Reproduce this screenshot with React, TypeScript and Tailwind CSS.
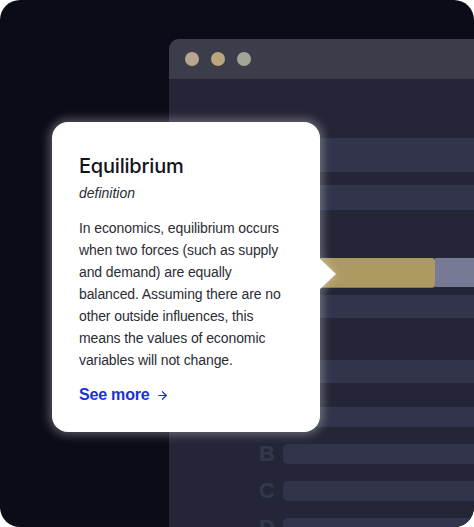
import { ArrowRight } from "lucide-react";

const answers = ["A", "B", "C", "D"];

export default function App() {
  return (
    <div
      className="bg-white w-[474px] h-[527px]"
      style={{ fontFamily: "'Liberation Sans', Arial, sans-serif" }}
    >
      <div className="relative w-[474px] h-[527px] rounded-[20px] bg-[#0a0c17] overflow-hidden pt-[39px] pl-[169px] flex">
        {/* mock browser window */}
        <div className="w-[340px] shrink-0 flex flex-col rounded-tl-[10px] overflow-hidden bg-[#242638]">
          <div className="h-[40px] shrink-0 bg-[#3b3d4b] flex items-center gap-[12px] pl-[16px]">
            <span className="w-[14px] h-[14px] rounded-full bg-[#b8a690]" />
            <span className="w-[14px] h-[14px] rounded-full bg-[#b9a67e]" />
            <span className="w-[14px] h-[14px] rounded-full bg-[#a0a796]" />
          </div>

          <div className="flex-1 min-h-0 flex flex-col overflow-hidden">
            <div className="shrink-0 mt-[59px] h-[34px] ml-[60px] bg-[#31344a]" />
            <div className="shrink-0 mt-[13px] h-[25px] ml-[60px] bg-[#31344a]" />
            <div className="shrink-0 mt-[48px] h-[29px] ml-[60px] flex">
              <div className="w-[206px] bg-[#ad9962] rounded-r-[3px] shadow-[0_1px_0_#8a7a4c]" />
              <div className="flex-1 bg-[#777a94]" />
            </div>
            <div className="shrink-0 mt-[8px] h-[23px] ml-[60px] bg-[#31344a]" />
            <div className="shrink-0 mt-[42px] h-[23px] ml-[60px] bg-[#31344a]" />

            <div className="shrink-0 mt-[24px] flex flex-col gap-[17px]">
              {answers.map((a) => (
                <div key={a} className="flex items-center h-[20px] pl-[90px]">
                  <span className="w-[24px] text-[22px] font-bold leading-none text-[#34374d]">
                    {a}
                  </span>
                  <div className="flex-1 h-[20px] rounded-[5px] bg-[#31344a]" />
                </div>
              ))}
            </div>
          </div>
        </div>

        {/* definition popover */}
        <div className="absolute left-[52px] top-[122px] w-[268px] rounded-[16px] bg-white pt-[30px] pb-[25px] px-[27px] shadow-[0_0_10px_3px_rgba(255,255,255,0.3)]">
          <svg
            className="absolute right-[-17px] top-[136px] drop-shadow-[0_0_5px_rgba(255,255,255,0.35)]"
            width="18"
            height="32"
            viewBox="0 0 18 32"
          >
            <polygon points="0,0 17,16 0,32" fill="#ffffff" />
          </svg>

          <h1
            className="text-[20px] leading-[28px] font-medium text-[#12141c] tracking-[-0.2px]"
            style={{ fontFamily: "Inter, 'Liberation Sans', sans-serif" }}
          >
            Equilibrium
          </h1>
          <p className="mt-[3px] text-[14px] leading-[20px] italic text-[#2b2c34]">
            definition
          </p>
          <p className="mt-[14px] text-[14px] leading-[22px] tracking-[-0.1px] text-[#2b2c34] whitespace-nowrap">
            In economics, equilibrium occurs
            <br />
            when two forces (such as supply
            <br />
            and demand) are equally
            <br />
            balanced. Assuming there are no
            <br />
            other outside influences, this
            <br />
            means the values of economic
            <br />
            variables will not change.
          </p>
          <a className="mt-[12px] flex items-center gap-[7px] text-[16px] leading-[24px] font-bold tracking-[-0.2px] text-[#1932d6]">
            See more
            <ArrowRight className="w-[13px] h-[13px]" strokeWidth={2.2} />
          </a>
        </div>
      </div>
    </div>
  );
}
